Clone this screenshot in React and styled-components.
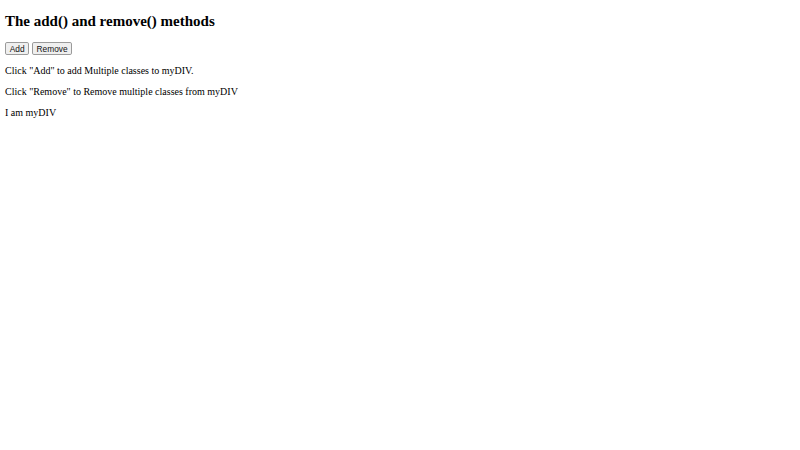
import React from "react";
import styled, { createGlobalStyle } from "styled-components";

const Global = createGlobalStyle`
  html, body { margin: 0; padding: 0; background: #fff; }
  body { font-family: "Liberation Serif", "Times New Roman", serif; color: #000; }
`;

const Page = styled.div`
  zoom: 0.625;
  padding: 0 8px;
  font-family: "Liberation Serif", "Times New Roman", serif;
  font-size: 16px;
`;

const Title = styled.h2`
  font-size: 24px;
  font-weight: bold;
  margin: 21px 0 19px;
`;

const ButtonRow = styled.div`
  display: flex;
  gap: 4px;
`;

const Button = styled.button`
  appearance: none;
  font-family: "Liberation Sans", Arial, sans-serif;
  font-size: 13.333px;
  line-height: 16px;
  padding: 1px 6px;
  color: #111;
  background: #efefef;
  border: 1.6px solid #9a9a9a;
  border-radius: 3px;
`;

const Text = styled.p`
  margin: 16px 0;
`;

const Box = styled.div``;

export default function App() {
  return (
    <>
      <Global />
      <Page>
        <Title>The add() and remove() methods</Title>
        <ButtonRow>
          <Button>Add</Button>
          <Button>Remove</Button>
        </ButtonRow>
        <Text>Click "Add" to add Multiple classes to myDIV.</Text>
        <Text>Click "Remove" to Remove multiple classes from myDIV</Text>
        <Box>I am myDIV</Box>
      </Page>
    </>
  );
}
